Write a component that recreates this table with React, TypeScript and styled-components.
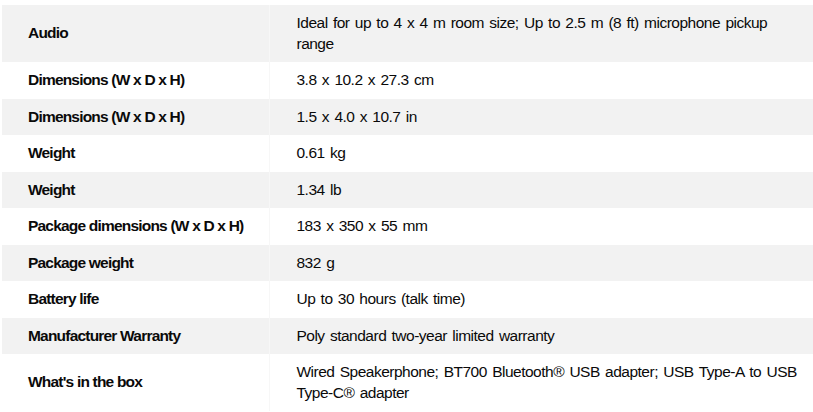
import React from "react";
import styled, { createGlobalStyle } from "styled-components";

const GlobalStyle = createGlobalStyle`
  html, body {
    margin: 0;
    padding: 0;
    background: #fff;
  }
  body {
    font-family: "Liberation Sans", Arial, sans-serif;
    color: #0a0a0a;
  }
`;

const specs = [
  { label: "Audio", value: "Ideal for up to 4 x 4 m room size; Up to 2.5 m (8 ft) microphone pickup range" },
  { label: "Dimensions (W x D x H)", value: "3.8 x 10.2 x 27.3 cm" },
  { label: "Dimensions (W x D x H)", value: "1.5 x 4.0 x 10.7 in" },
  { label: "Weight", value: "0.61 kg" },
  { label: "Weight", value: "1.34 lb" },
  { label: "Package dimensions (W x D x H)", value: "183 x 350 x 55 mm" },
  { label: "Package weight", value: "832 g" },
  { label: "Battery life", value: "Up to 30 hours (talk time)" },
  { label: "Manufacturer Warranty", value: "Poly standard two-year limited warranty" },
  {
    label: "What's in the box",
    value: "Wired Speakerphone; BT700 Bluetooth® USB adapter; USB Type-A to USB Type-C® adapter",
  },
];

const App = () => {
  return (
    <Container>
      <GlobalStyle />
      <Table>
        <tbody>
          {specs.map((s, i) => (
            <Row key={i} $shaded={i % 2 === 0}>
              <Label>{s.label}</Label>
              <Value>{s.value}</Value>
            </Row>
          ))}
        </tbody>
      </Table>
    </Container>
  );
};

export default App;

const Value = styled.td`
  padding: 8px 15px 8px 26px;
  border-left: 1px solid #f7f7f7;
  font-size: 15.5px;
  line-height: 20.5px;
  letter-spacing: -0.5px;
  word-spacing: 1.5px;
  vertical-align: middle;
`;

const Label = styled.td`
  width: 215px;
  padding: 8px 26px;
  font-size: 15.5px;
  line-height: 20.5px;
  font-weight: 700;
  letter-spacing: -0.8px;
  white-space: nowrap;
  vertical-align: middle;
`;

const Row = styled.tr<{ $shaded: boolean }>`
  background-color: ${(p) => (p.$shaded ? "#f2f2f2" : "#fff")};
`;

const Table = styled.table`
  width: 811px;
  border-collapse: collapse;
  border-spacing: 0;
`;

const Container = styled.div`
  padding: 5px 0 0 2px;
`;
